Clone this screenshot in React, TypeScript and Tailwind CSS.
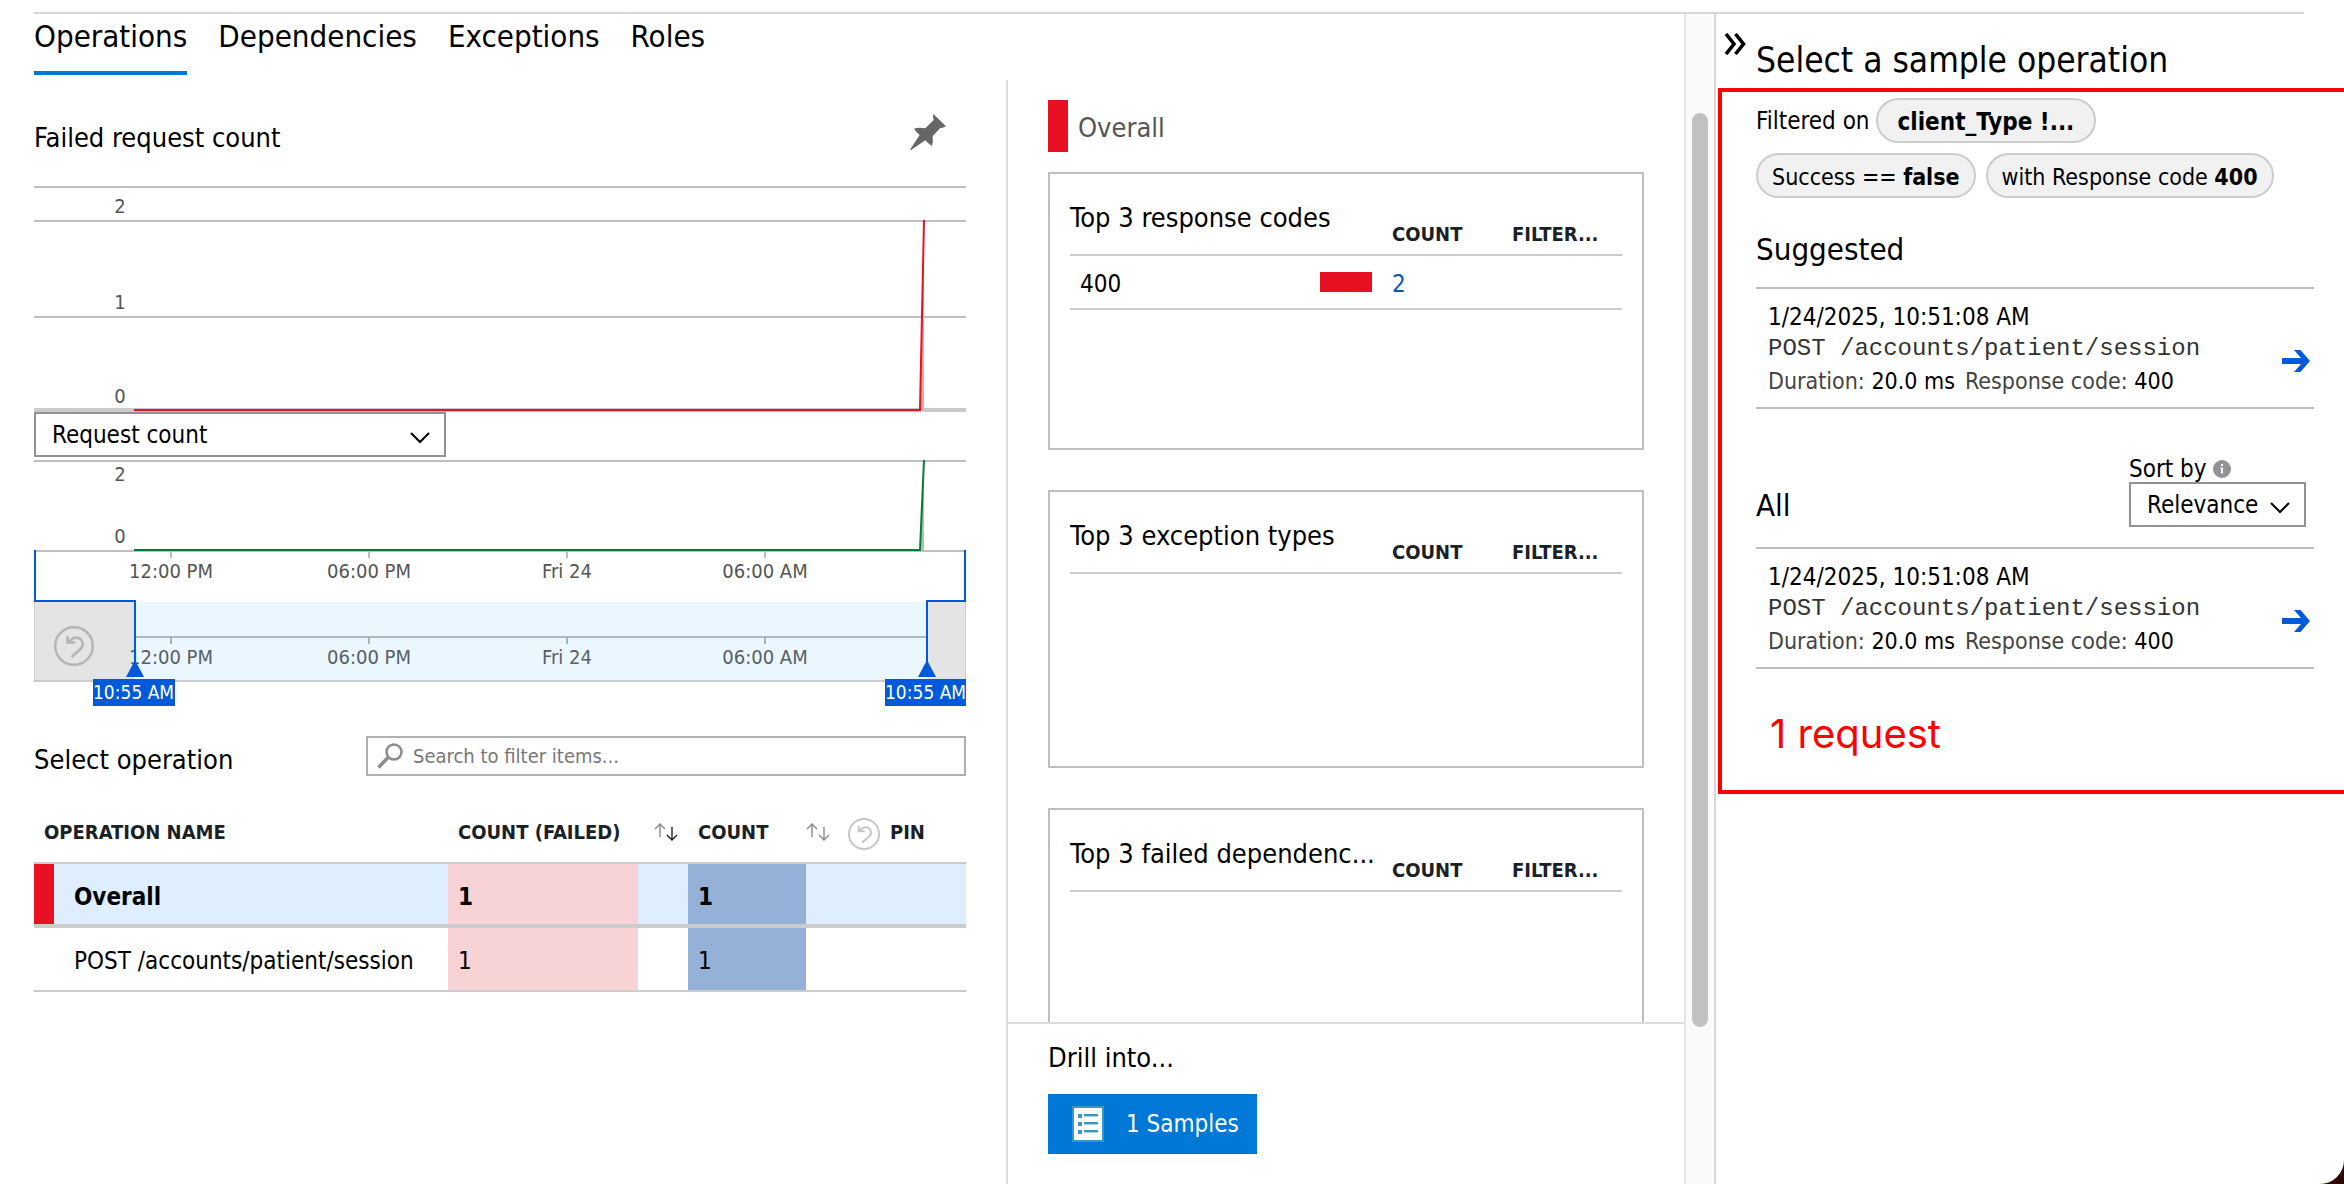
import React from "react";

const SANS = "font-['DejaVu_Sans_Condensed','DejaVu_Sans',sans-serif]";

const X_TICKS = [
  { x: 137, label: "12:00 PM" },
  { x: 335, label: "06:00 PM" },
  { x: 533, label: "Fri 24" },
  { x: 731, label: "06:00 AM" },
];

function PinIcon() {
  return (
    <svg viewBox="0 0 108 108" className="size-9" fill="#666666" aria-hidden="true">
      <path d="M70 0 L108 37 Q98 43 91 42 L68 66 Q70 84 66 96 Q54 89 46 79 L3 108 L0 107 L29 63 Q19 55 12 44 Q26 39 46 43 L71 18 Q68 8 70 0 Z" />
    </svg>
  );
}

function UndoGlyph({ cx, cy, color }: { cx: number; cy: number; color: string }) {
  return (
    <g transform={`translate(${cx} ${cy})`} fill="none" stroke={color} strokeWidth="2.4">
      <circle r="18.8" />
      <path d="M-2.5 11 L7 2.5 Q10.500 -2 7 -6.500 Q1.500 -11.500 -6 -3.800" strokeWidth="2.6" />
      <path d="M-6.500 -10 V-3.500 H1" strokeWidth="2.6" />
    </g>
  );
}

function Chevron({ className }: { className: string }) {
  return (
    <svg viewBox="0 0 20 12" className={className} fill="none" stroke="#000" strokeWidth="2" aria-hidden="true">
      <path d="M1 1 L10 10 L19 1" />
    </svg>
  );
}

function SortArrows({ active }: { active?: boolean }) {
  return (
    <svg viewBox="0 0 24 20" className="h-5 w-6" fill="none" strokeWidth="1.4" aria-hidden="true">
      <path d="M6 15 V2 M1 7 L6 2 L11 7" stroke="#8a8a8a" />
      <path d="M18 5 V18 M13 13 L18 18 L23 13" stroke={active ? "#222" : "#8a8a8a"} />
    </svg>
  );
}

function FailedChart() {
  return (
    <svg viewBox="0 0 932 226" className="block w-full" role="img" aria-label="Failed request count over time">
      <g fill="#bfbfbf">
        <rect y="0" width="932" height="2" />
        <rect y="34" width="932" height="2" />
        <rect y="130" width="932" height="2" />
      </g>
      <rect y="222" width="932" height="4" fill="#cacaca" />
      <path d="M886 224 L890 34 V224 Z" fill="#f9a3a8" />
      <path d="M100 224 H886 L890 34" fill="none" stroke="#e81123" strokeWidth="2" />
      <g fontSize="20" fill="#555" textAnchor="middle">
        <text x="86" y="27">2</text>
        <text x="86" y="123">1</text>
        <text x="86" y="217">0</text>
      </g>
    </svg>
  );
}

function RequestChart() {
  return (
    <svg viewBox="0 0 932 248" className="block w-full" role="img" aria-label="Request count over time with time range selector">
      <rect y="0" width="932" height="2" fill="#bfbfbf" />
      <rect y="90" width="932" height="2" fill="#bfbfbf" />
      <path d="M886 90 L890 0 V90 Z" fill="#a3c9b0" />
      <path d="M100 90 H886 L890 0" fill="none" stroke="#0a7a3c" strokeWidth="2" />
      <g fontSize="20" fill="#555" textAnchor="middle">
        <text x="86" y="21">2</text>
        <text x="86" y="83">0</text>
        {X_TICKS.map((t) => (
          <g key={t.label}>
            <rect x={t.x - 1} y="92" width="2" height="6" fill="#bfbfbf" />
            <text x={t.x} y="118">{t.label}</text>
          </g>
        ))}
      </g>
      <rect x="0" y="142" width="932" height="80" fill="#ccc" />
      <rect x="1" y="142" width="930" height="78" fill="#e4e4e4" />
      <rect x="100" y="142" width="793" height="78" fill="#ebf7fe" />
      <rect x="102" y="176" width="791" height="2" fill="#adb9c1" />
      <g fontSize="20" fill="#566067" textAnchor="middle">
        {X_TICKS.map((t) => (
          <g key={t.label}>
            <rect x={t.x - 1} y="176" width="2" height="8" fill="#9fb3c2" />
            <text x={t.x} y="204">{t.label}</text>
          </g>
        ))}
      </g>
      <UndoGlyph cx={40} cy={186} color="#b5b5b5" />
      <g fill="none" stroke="#005ad9" strokeWidth="2">
        <path d="M1 90 V141 H101 V204" />
        <path d="M931 90 V141 H893 V204" />
      </g>
      <g fill="#005ad9">
        <path d="M101 200 L110 217 H92 Z" />
        <path d="M893 200 L902 217 H884 Z" />
        <rect x="59" y="219" width="82" height="27" />
        <rect x="851" y="219" width="81" height="27" />
      </g>
      <g fontSize="19" fill="#fff">
        <text x="59" y="239">10:55 AM</text>
        <text x="851" y="239">10:55 AM</text>
      </g>
    </svg>
  );
}

function OperationsTable() {
  const th = "h-[62px] border-b-2 border-[#ccc] text-left text-[20px] font-bold text-[#1b1f26]";
  return (
    <table className="mt-[26px] w-full table-fixed border-separate border-spacing-0 whitespace-nowrap text-[24px] leading-8">
      <colgroup>
        <col />
        <col className="w-[190px]" />
        <col className="w-[50px]" />
        <col className="w-[118px]" />
        <col className="w-[42px]" />
        <col className="w-[118px]" />
      </colgroup>
      <thead>
        <tr>
          <th className={`${th} pl-[10px]`}>OPERATION NAME</th>
          <th className={`${th} pl-[10px]`}>COUNT (FAILED)</th>
          <th className={`${th} pl-4`} aria-label="Sort by failed count"><SortArrows active /></th>
          <th className={`${th} pl-[10px]`}>COUNT</th>
          <th className={th} aria-label="Sort by count"><SortArrows /></th>
          <th className={th}>
            <span className="flex items-center gap-[10px]">
              <svg viewBox="-20 -20 40 40" className="mt-1 size-8" aria-hidden="true">
                <UndoGlyph cx={0} cy={0} color="#c6c6c6" />
              </svg>
              PIN
            </span>
          </th>
        </tr>
      </thead>
      <tbody>
        <tr className="bg-[#deeefe] font-bold">
          <td className="h-16 border-b-4 border-[#ccc] p-0">
            <div className="flex h-[60px] items-center border-l-[20px] border-[#e81123] pt-[6px] pl-5">Overall</div>
          </td>
          <td className="border-b-4 border-[#ccc] bg-[#f8d3d6] pt-[6px] pl-[10px]">1</td>
          <td className="border-b-4 border-[#ccc]" />
          <td className="border-b-4 border-[#ccc] bg-[#95b1d7] pt-[6px] pl-[10px]">1</td>
          <td className="border-b-4 border-[#ccc]" />
          <td className="border-b-4 border-[#ccc]" />
        </tr>
        <tr>
          <td className="h-16 border-b-2 border-[#ccc] pt-1 pl-10">POST /accounts/patient/session</td>
          <td className="border-b-2 border-[#ccc] bg-[#f8d3d6] pt-1 pl-[10px]">1</td>
          <td className="border-b-2 border-[#ccc]" />
          <td className="border-b-2 border-[#ccc] bg-[#95b1d7] pt-1 pl-[10px]">1</td>
          <td className="border-b-2 border-[#ccc]" />
          <td className="border-b-2 border-[#ccc]" />
        </tr>
      </tbody>
    </table>
  );
}

function TopCard({ title, rows }: { title: string; rows: { name: string; count: string }[] }) {
  return (
    <section className="mb-10 h-[278px] shrink-0 border-2 border-[#bfbfbf] px-5">
      <table className="w-full table-fixed border-separate border-spacing-0 whitespace-nowrap">
        <colgroup>
          <col />
          <col className="w-[120px]" />
          <col className="w-[110px]" />
        </colgroup>
        <thead>
          <tr>
            <th className="h-[82px] border-b-2 border-[#ccc] pt-2 text-left text-[27px] leading-9 font-normal">{title}</th>
            <th className="border-b-2 border-[#ccc] pt-10 text-left text-[20px] leading-6 font-bold text-[#1b1f26]">COUNT</th>
            <th className="border-b-2 border-[#ccc] pt-10 text-left text-[20px] leading-6 font-bold text-[#1b1f26]">FILTER...</th>
          </tr>
        </thead>
        <tbody>
          {rows.map((r) => (
            <tr key={r.name} className="text-[24px] leading-8">
              <td className="h-[54px] border-b-2 border-[#ccc] pt-1 pr-5 pl-[10px]">
                <div className="flex items-center justify-between">
                  {r.name}
                  <span className="mb-1 h-5 w-[52px] bg-[#e81123]" />
                </div>
              </td>
              <td className="border-b-2 border-[#ccc] pt-1">
                <a href="#samples" className="text-[#0b57a8]">{r.count}</a>
              </td>
              <td className="border-b-2 border-[#ccc]" />
            </tr>
          ))}
        </tbody>
      </table>
    </section>
  );
}

function SampleItem() {
  return (
    <button type="button" className="mr-[30px] flex items-center justify-between border-y-2 border-[#bdbdbd] pt-3 pr-1 pb-[10px] pl-3 text-left text-[24px] leading-8 whitespace-nowrap">
      <span className="flex flex-col">
        <span>1/24/2025, 10:51:08 AM</span>
        <span className="font-['Liberation_Mono',monospace] text-[#333]">POST /accounts/patient/session</span>
        <span className="flex gap-[10px] text-[23px]">
          <span><span className="text-[#444]">Duration:</span> 20.0 ms</span>
          <span><span className="text-[#444]">Response code:</span> 400</span>
        </span>
      </span>
      <svg viewBox="0 0 28 22" className="mt-6 h-[22px] w-7" fill="#005ad9" aria-hidden="true">
        <path d="M0 8 H19 L12 0 H18.500 L28 11 L18.500 22 H12 L19 14 H0 Z" />
      </svg>
    </button>
  );
}

function Pill({ children, wide }: { children: React.ReactNode; wide?: boolean }) {
  return (
    <span className={`flex h-[45px] items-center rounded-full border-2 border-[#ccc] bg-[#f1f1f1] pt-[2px] whitespace-pre ${wide ? "px-5" : "px-[14px]"}`}>
      {children}
    </span>
  );
}

export default function App() {
  return (
    <div className="bg-[#2e0606]">
      <div className={`flex h-screen flex-col overflow-hidden rounded-br-[24px] bg-white pt-3 text-black ${SANS}`}>
        <div className="mr-10 ml-[34px] h-[2px] shrink-0 bg-[#d6d6d6]" />
        <div className="flex min-h-0 flex-1">
          <main className="flex min-w-0 flex-1 flex-col">
            <nav className="flex gap-[31px] pl-[34px] text-[31px] leading-10">
              <button type="button" className="border-b-4 border-[#0078d4] pt-[2px] pb-[15px]">Operations</button>
              <button type="button" className="border-b-4 border-transparent pt-[2px] pb-[15px]">Dependencies</button>
              <button type="button" className="border-b-4 border-transparent pt-[2px] pb-[15px]">Exceptions</button>
              <button type="button" className="border-b-4 border-transparent pt-[2px] pb-[15px]">Roles</button>
            </nav>

            <div className="mt-[5px] grid min-h-0 flex-1 grid-cols-[1006fr_678fr]">
              <section className="flex min-w-0 flex-col pt-[34px] pr-10 pl-[34px]">
                <div className="flex h-[42px] justify-between">
                  <h2 className="self-end text-[27px] leading-9">Failed request count</h2>
                  <button type="button" aria-label="Pin" className="mr-5 self-start"><PinIcon /></button>
                </div>
                <div className="mt-[30px]">
                  <FailedChart />
                  <div className="h-12">
                    <div className="relative w-[412px]">
                      <select aria-label="Chart metric" className="block h-[45px] w-full appearance-none border-2 border-[#919196] bg-white pl-4 text-[24px] leading-8">
                        <option>Request count</option>
                      </select>
                      <Chevron className="pointer-events-none absolute top-5 right-4 h-3 w-5" />
                    </div>
                  </div>
                  <RequestChart />
                </div>

                <div className="mt-7 flex h-10 justify-between">
                  <h2 className="self-end text-[27px] leading-8">Select operation</h2>
                  <label className="flex w-[600px] items-center gap-[10px] border-2 border-[#b0b0b0] pl-[9px]">
                    <svg viewBox="0 0 26 26" className="size-[26px]" fill="none" stroke="#8c8c8c" aria-hidden="true">
                      <circle cx="17" cy="9" r="7.500" strokeWidth="2.500" />
                      <path d="M11.500 14 L1.500 24.500" strokeWidth="3.500" />
                    </svg>
                    <input type="text" aria-label="Search operations" placeholder="Search to filter items..." className="min-w-0 flex-1 bg-transparent text-[20px] leading-8 outline-none placeholder:text-[#777]" />
                  </label>
                </div>
                <OperationsTable />
              </section>

              <section className="flex min-h-0 min-w-0 flex-col border-l-2 border-[#dcdcdc]">
                <div className="flex min-h-0 flex-1 flex-col overflow-hidden px-10 pt-5">
                  <div className="mb-5 flex h-[52px] shrink-0 items-center border-l-[20px] border-[#e81123] pt-1 pl-[10px] text-[27px] text-[#555]">Overall</div>
                  <TopCard title="Top 3 response codes" rows={[{ name: "400", count: "2" }]} />
                  <TopCard title="Top 3 exception types" rows={[]} />
                  <TopCard title="Top 3 failed dependenc..." rows={[]} />
                </div>
                <div className="flex h-[162px] shrink-0 flex-col items-start border-t-2 border-[#dcdcdc] px-10 pt-4">
                  <h2 className="text-[27px] leading-9">Drill into...</h2>
                  <button type="button" className="mt-[18px] flex h-15 items-center gap-[22px] bg-[#0078d7] pr-[18px] pl-6 text-[24px] text-white">
                    <svg viewBox="0 0 32 36" className="h-9 w-8" aria-hidden="true">
                      <rect width="32" height="36" fill="#3999c6" />
                      <rect x="2" y="2" width="28" height="32" fill="#fff" />
                      <g fill="#3999c6">
                        <path d="M6 8h4v4H6z M6 16h4v4H6z M6 24h4v4H6z" />
                        <path d="M12 8h14v2H12z M12 16h14v2H12z M12 24h14v2H12z" />
                      </g>
                      <path d="M12 10h14v1H12z M12 18h14v1H12z M12 26h14v1H12z" fill="#a9d3e8" />
                    </svg>
                    1 Samples
                  </button>
                </div>
              </section>
            </div>
          </main>

          <div className="w-8 shrink-0 border-x-2 border-l-[#e4e4e4] border-r-[#d6d6d6] bg-[#fafafa] pt-[99px] pl-[6px]">
            <div className="h-[914px] w-4 rounded-full bg-[#c1c1c1]" />
          </div>

          <aside className="flex w-[628px] shrink-0 flex-col">
            <div className="flex gap-[10px] pt-[18px] pl-2">
              <button type="button" aria-label="Collapse panel" className="mt-px self-start">
                <svg viewBox="0 0 22 22" className="size-[22px]" fill="none" stroke="#000" strokeWidth="3.6" aria-hidden="true">
                  <path d="M2 1 L10 11 L2 21 M11.500 1 L19.500 11 L11.500 21" />
                </svg>
              </button>
              <h1 className="mt-1 text-[35px] leading-12">Select a sample operation</h1>
            </div>

            <section className="mt-1 ml-[2px] flex flex-col border-4 border-r-0 border-[#f00] pt-[6px] pb-8 pl-[34px]">
              <div className="flex items-center gap-[6px] text-[24px] leading-8">
                <span>Filtered on</span>
                <Pill wide><b>client_Type !...</b></Pill>
              </div>
              <div className="mt-[10px] flex gap-[10px] text-[23px] leading-8 whitespace-nowrap">
                <Pill>Success == <b>false</b></Pill>
                <Pill>with Response code <b>400</b></Pill>
              </div>

              <h2 className="mt-[31px] mb-[18px] text-[31px] leading-10">Suggested</h2>
              <SampleItem />

              <div className="mt-12 mb-5 flex items-end justify-between pr-[38px]">
                <h2 className="mb-[2px] text-[31px] leading-10">All</h2>
                <div className="w-[177px] text-[24px]">
                  <label htmlFor="sort" className="flex items-center gap-[6px] leading-6">
                    Sort by
                    <svg viewBox="0 0 18 18" className="size-[18px]" aria-hidden="true">
                      <circle cx="9" cy="9" r="9" fill="#919196" />
                      <path d="M8 4h2v2H8z M7 7.500h3v6H8v-5H7z" fill="#fff" />
                    </svg>
                  </label>
                  <div className="relative mt-px">
                    <select id="sort" className="block h-[45px] w-full appearance-none border-2 border-[#919196] bg-white pl-4 leading-8">
                      <option>Relevance</option>
                    </select>
                    <Chevron className="pointer-events-none absolute top-5 right-4 h-3 w-5" />
                  </div>
                </div>
              </div>
              <SampleItem />

              <p className="mt-[41px] pl-[14px] font-['Inter',sans-serif] text-[40px] leading-12 text-[#f00]">1 request</p>
            </section>
          </aside>
        </div>
      </div>
    </div>
  );
}
